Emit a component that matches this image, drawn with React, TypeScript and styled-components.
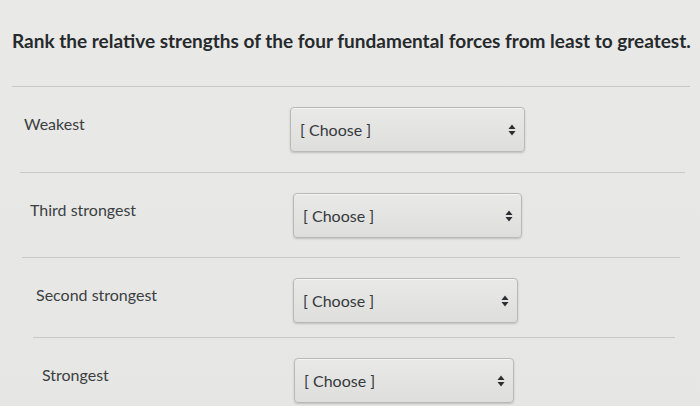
import styled, { createGlobalStyle } from "styled-components"

const GlobalStyle = createGlobalStyle`
  html, body {
    margin: 0;
    padding: 0;
    background: #e7e7e5;
  }
  body {
    font-family: Lato, "Open Sans", sans-serif;
    color: #2f3336;
  }
`

const Page = styled.div`
  width: 700px;
  height: 406px;
  overflow: hidden;
  background: linear-gradient(180deg, #e9e9e7 0%, #e6e6e4 100%);
`

const Question = styled.h1`
  margin: 0;
  padding: 29px 0 0 12px;
  height: 86px;
  box-sizing: border-box;
  font-size: 19px;
  font-weight: 700;
  line-height: 23px;
  color: #262a2d;
  white-space: nowrap;
`

const Answer = styled.div`
  display: flex;
  flex-direction: column;
`

const Divider = styled.div<{ $left: number; $right: number }>`
  height: 1px;
  margin: 0 ${p => p.$right}px 0 ${p => p.$left}px;
  background: #c8c8c5;
`

const Content = styled.div<{ $height: number }>`
  display: flex;
  align-items: flex-start;
  height: ${p => p.$height - 1}px;
`

const Label = styled.div<{ $x: number; $selectX: number }>`
  width: ${p => p.$selectX}px;
  padding: 27px 0 0 ${p => p.$x}px;
  box-sizing: border-box;
  font-size: 16px;
  line-height: 20px;
  color: #3b3f42;
`

const Select = styled.div<{ $width: number }>`
  margin-top: 20px;
  width: ${p => p.$width}px;
  height: 45px;
  box-sizing: border-box;
  display: flex;
  align-items: center;
  justify-content: space-between;
  padding: 0 8px 0 9px;
  border: 1px solid #b9b9b7;
  border-radius: 4px;
  background: linear-gradient(180deg, #e9e9e8 0%, #dededd 100%);
  box-shadow: 0 1px 2px rgba(0, 0, 0, 0.18), inset 0 1px 0 rgba(255, 255, 255, 0.5);
  font-size: 16px;
  color: #35393c;
`

const Arrows = () => (
  <svg width="8" height="12" viewBox="0 0 8 12">
    <path d="M4 0.5 L7.5 5 L0.5 5 Z" fill="#2c2f31" />
    <path d="M4 11.5 L7.5 7 L0.5 7 Z" fill="#2c2f31" />
  </svg>
)

const ranks = [
  { label: "Weakest", x: 24, selectX: 290, width: 235, height: 86, left: 12, right: 10 },
  { label: "Third strongest", x: 30, selectX: 293, width: 229, height: 85, left: 20, right: 15 },
  { label: "Second strongest", x: 36, selectX: 293, width: 225, height: 80, left: 22, right: 20 },
  { label: "Strongest", x: 42, selectX: 294, width: 220, height: 80, left: 33, right: 25 },
]

export default function App() {
  return (
    <>
      <GlobalStyle />
      <Page>
        <Question>
          Rank the relative strengths of the four fundamental forces from least to greatest.
        </Question>
        {ranks.map(r => (
          <Answer key={r.label}>
            <Divider $left={r.left} $right={r.right} />
            <Content $height={r.height}>
              <Label $x={r.x} $selectX={r.selectX}>{r.label}</Label>
              <Select $width={r.width}>
                <span>[ Choose ]</span>
                <Arrows />
              </Select>
            </Content>
          </Answer>
        ))}
      </Page>
    </>
  )
}
